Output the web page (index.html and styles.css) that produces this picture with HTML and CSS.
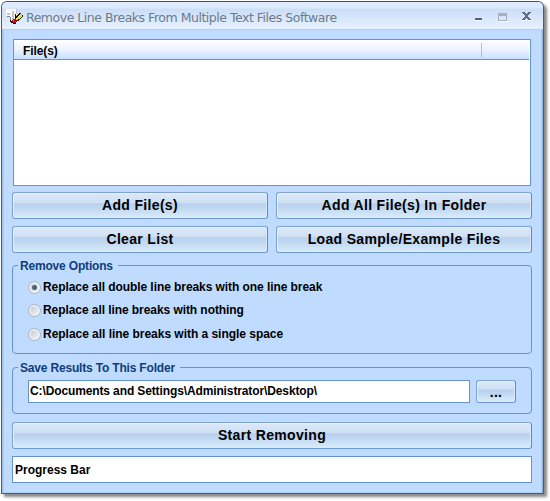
FILE: index.html
```html
<!DOCTYPE html>
<html lang="en">
<head>
<meta charset="utf-8">
<title>Remove Line Breaks From Multiple Text Files Software</title>
<link rel="stylesheet" href="styles.css">
</head>
<body>
<div class="window">
  <header class="titlebar">
    <svg class="app-icon" width="18" height="17" viewBox="0 0 18 17" shape-rendering="crispEdges">
      <path fill="#fafaf6" d="M0 1h11v6h-2v6h-5v-5h-4z"/>
      <path fill="#c2c6c8" d="M1 5h3v2h-3zM6 3h2v9h-2zM10 1h1v5h-1z"/>
      <path fill="#7d858c" d="M1 8h3v1h-3zM4 9h1v3h-1z"/>
      <path fill="#15150c" d="M4 12h1v1h1v1h1v1h-2v-1h-1zM9 6h1v2h1v2h-1v1h-1zM14 5h1v1h-1v1h-1v1h-1v1h-1v-2h1v-1h1v-1zM16 7h1v2h-1v1h-1v1h-1v1h-1v1h-2v-1h1v-1h2v-1h1v-1h1zM7 15h3v1h-3z"/>
      <path fill="#e4da38" d="M14 6h2v2h-1v1h-1v1h-1v1h-1v1h-2v-2h1v-1h1v-1h1v-1h1z"/>
      <path fill="#fff9a0" d="M14 6h1v1h-1zM13 7h1v1h-1zM12 8h1v1h-1z"/>
      <path fill="#b90f22" d="M7 11h3v1h1v2h-1v1h-3v-1h-1v-2h1z"/>
      <path fill="#ed6570" d="M7 12h1v1h-1z"/>
    </svg>
    <h1 class="title">Remove Line Breaks From Multiple Text Files Software</h1>
    <svg class="controls" width="60" height="12" viewBox="0 0 60 12" shape-rendering="crispEdges">
      <path fill="#fff" d="M1 9h7v1h-7z"/><path fill="#52617b" d="M1 7h7v2h-7z"/>
      <path fill="#fff" d="M25 10h9v1h-9z"/>
      <path fill="#a5afbd" fill-rule="evenodd" d="M24 2h9v8h-9zM25 5v4h7v-4z"/>
      <path fill="#fff" d="M48 9h3v1h-3zM54 9h3v1h-3z"/>
      <path fill="#5b6c87" d="M48 1h3v1h1v1h1v-1h1v-1h3v1h-1v1h-1v1h-1v2h1v1h1v1h1v1h-3v-1h-1v-1h-1v1h-1v1h-3v-1h1v-1h1v-1h1v-2h-1v-1h-1v-1h-1z"/>
    </svg>
  </header>
  <main class="content">
    <section class="file-list">
      <div class="list-head"><span class="col-name">File(s)</span><span class="col-rest"></span></div>
    </section>
    <div class="buttons">
      <button class="btn add">Add File(s)</button>
      <button class="btn folder">Add All File(s) In Folder</button>
      <button class="btn clear">Clear List</button>
      <button class="btn sample">Load Sample/Example Files</button>
    </div>
    <section class="group options">
      <h2 class="legend">Remove Options</h2>
      <div class="option"><span class="radio checked"></span><span class="label">Replace all double line breaks with one line break</span></div>
      <div class="option"><span class="radio"></span><span class="label">Replace all line breaks with nothing</span></div>
      <div class="option"><span class="radio"></span><span class="label">Replace all line breaks with a single space</span></div>
    </section>
    <section class="group save">
      <h2 class="legend">Save Results To This Folder</h2>
      <div class="path-row">
        <div class="path">C:\Documents and Settings\Administrator\Desktop\</div>
        <button class="btn browse">...</button>
      </div>
    </section>
    <button class="btn start">Start Removing</button>
    <div class="progress">Progress Bar</div>
  </main>
</div>
</body>
</html>
```
FILE: styles.css
```css
* { box-sizing: border-box; }
body {
  margin: 0;
  height: 501px;
  padding: 1px;
  overflow: hidden;
  background: #fff;
  font: bold 12px/14px "Liberation Sans", Arial, sans-serif;
  color: #000;
}
h1, h2 { margin: 0; font: inherit; }
.window {
  width: 543px;
  height: 493px;
  border: 1px solid #3f5f83;
  border-top-color: #365665;
  border-radius: 6px 6px 0 0;
  background: #bfdbff;
  box-shadow: inset 1px 0 #9fc2ea, inset -1px 0 #8fb2dd, inset 2px -1px #aecdf5, inset -2px 0 #b1cff5, 3px 3px 3px #888;
}
.titlebar {
  display: flex;
  align-items: flex-start;
  height: 28px;
  padding: 6px 9px 0 4px;
  border-bottom: 1px solid #afd0f5;
  border-radius: 5px 5px 0 0;
  background: linear-gradient(#e0edff 0, #dceaff 6px, #cadef7 7px, #dbe9fb 18px, #e5f0ff 26px);
}
.title {
  flex: 1;
  margin: 2px 0 0 2px;
  font: 12.5px/16px "DejaVu Sans", sans-serif;
  letter-spacing: -0.48px;
  color: #6d7a8b;
  white-space: nowrap;
}
.app-icon { flex: none; }
.controls { margin: 3px 0 0; }
.content { padding: 9px 11px 0 10px; }
.file-list {
  height: 147px;
  margin: 0 1px 6px;
  border: 1px solid #6593cf;
  background: #fff;
}
.list-head {
  display: flex;
  height: 20px;
  margin-right: 1px;
  padding: 3px 0 0 9px;
  border-bottom: 1px solid #6593cf;
  background: linear-gradient(#fff, #edf4ff 45%, #c9dfff);
}
.col-name { flex: 1; padding-top: 1px; letter-spacing: -0.1px; }
.col-rest { width: 48px; height: 14px; border-left: 1px solid #9ac6ef; }
.buttons { display: grid; grid-template-columns: 256px 256px; gap: 7px 8px; }
.btn {
  display: block;
  width: 100%;
  height: 27px;
  padding: 0 0 1px;
  border: 1px solid #7fa3d0;
  border-right-color: #5f88bb;
  border-bottom-color: #7099c9;
  border-radius: 3px;
  background: linear-gradient(#dce9f8 0, #cfe0f4 38%, #b9d1ed 43%, #bdd5f0 55%, #d8ecfb 100%);
  box-shadow: inset 1px 1px #e5f0fc, inset -1px -1px #d9ebfc;
  font: bold 14px/24px "Liberation Sans", Arial, sans-serif;
  color: #000;
  letter-spacing: 0.33px;
}
.group {
  position: relative;
  border: 1px solid #6593cf;
  border-radius: 4px;
}
.legend {
  position: absolute;
  top: -7px;
  left: 5px;
  padding: 0 5px 0 2px;
  background: #bfdbff;
  color: #103d7a;
  line-height: 14px;
  letter-spacing: -0.18px;
}
.options { height: 89px; margin-top: 12px; padding: 14px 0 0 15px; }
.option { display: flex; align-items: center; gap: 2px; height: 14px; margin-bottom: 9px; letter-spacing: -0.07px; }
.option + .option + .option { margin-top: 10px; letter-spacing: -0.03px; }
.radio {
  display: flex;
  align-items: center;
  justify-content: center;
  width: 13px;
  height: 13px;
  border: 1px solid #a9b6c4;
  border-radius: 50%;
  background: linear-gradient(135deg, #bcc4ce, #fafafa);
  box-shadow: inset 0 0 0 1.5px #f2f3f4;
}
.checked::after { content: ""; width: 5px; height: 5px; border-radius: 50%; background: #4c6078; }
.save { height: 47px; margin-top: 13px; padding: 12px 15px 0; }
.path-row { display: flex; gap: 6px; }
.path {
  flex: none;
  width: 442px;
  height: 23px;
  padding: 3px 0 0 1px;
  border: 1px solid #6593cf;
  background: #fff;
  line-height: 14px;
  letter-spacing: -0.12px;
}
.browse { flex: none; width: 40px; height: 23px; padding: 0; line-height: 20px; }
.start { margin-top: 8px; }
.progress {
  height: 27px;
  margin-top: 7px;
  padding: 6px 0 0 2px;
  border: 1px solid #6593cf;
  background: #fff;
}
```
